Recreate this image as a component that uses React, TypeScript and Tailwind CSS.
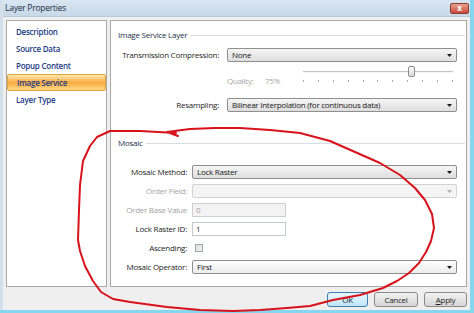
import React from "react";

const Arrow = ({ disabled }: { disabled?: boolean }) => (
  <svg width="5" height="3" viewBox="0 0 5 3" className="shrink-0">
    <path d="M0 0 L5 0 L2.5 3 Z" fill={disabled ? "#b0b0b0" : "#1a1a1a"} />
  </svg>
);

const Select = ({ value, disabled, className = "" }: { value: string; disabled?: boolean; className?: string }) => (
  <div
    className={
      "h-[14px] flex items-center justify-between pl-[4px] pr-[4px] rounded-[2px] border " +
      (disabled
        ? "border-[#d3d3d3] bg-[#f4f4f4] text-[#a0a0a0] "
        : "border-[#8f8f8f] bg-gradient-to-b from-[#f6f6f6] to-[#dedede] text-[#1a1a1a] ") +
      className
    }
  >
    <span className="leading-none whitespace-nowrap">{value}</span>
    <Arrow disabled={disabled} />
  </div>
);

const Label = ({ children, disabled, w }: { children: React.ReactNode; disabled?: boolean; w: string }) => (
  <div
    className={
      "text-right shrink-0 leading-none whitespace-nowrap " + w + (disabled ? " text-[#a3a3a3]" : " text-[#1e1e1e]")
    }
  >
    {children}
  </div>
);

const GroupHeader = ({ title }: { title: string }) => (
  <div className="flex items-center gap-[3px] h-[12px]">
    <span className="text-[#1e2f4a] leading-none">{title}</span>
    <div className="flex-1 h-px bg-[#d5dde5]" />
  </div>
);

const Btn = ({ children, def, w }: { children: React.ReactNode; def?: boolean; w: string }) => (
  <div
    className={
      "h-[15px] flex items-center justify-center rounded-[3px] border text-[#1e1e1e] " +
      w +
      (def
        ? " border-[#3c7fb1] bg-gradient-to-b from-[#eaf6fd] to-[#bee6fd]"
        : " border-[#8a8a8a] bg-gradient-to-b from-[#f2f2f2] to-[#d6d6d6]")
    }
  >
    {children}
  </div>
);

const navItems = ["Description", "Source Data", "Popup Content", "Image Service", "Layer Type"];

export default function App() {
  return (
    <div className="w-[474px] h-[313px] bg-[#86d6ef] relative overflow-hidden font-['Open_Sans','Noto_Sans',sans-serif] text-[8px] tracking-[-0.25px]">
      <div className="w-[470px] h-[310px] flex flex-col bg-[#efefef] border-l-[3px] border-[#d3e0ec]">
        {/* title bar */}
        <div className="h-[17px] flex items-center justify-between pl-[2px] pr-[1px] bg-gradient-to-b from-[#d9e6f2] to-[#c8d8e8] border-b border-[#b9c9d9]">
          <span className="text-[#1b2c44] text-[8.5px] leading-none">Layer Properties</span>
          <div className="w-[19px] h-[11px] rounded-[2px] border border-[#8b3b30] bg-gradient-to-b from-[#e9a293] to-[#c7473a] flex items-center justify-center text-white text-[8px] font-bold leading-none">
            x
          </div>
        </div>

        <div className="flex-1 flex flex-col pt-[3px] pl-[3px] pr-[3px]">
          <div className="flex gap-[3px] h-[267px]">
            {/* nav */}
            <div className="w-[101px] border border-[#a9a9a9] bg-white pt-[2px] flex flex-col">
              {navItems.map((n) => (
                <div
                  key={n}
                  className={
                    "h-[17px] flex items-center pl-[9px] leading-none font-semibold text-[#223c86] " +
                    (n === "Image Service"
                      ? "rounded-[2px] border border-[#e1a43a] bg-gradient-to-b from-[#fde8a9] via-[#f9aa3f] to-[#fcd87f] text-[#2a2a40]"
                      : "")
                  }
                >
                  {n}
                </div>
              ))}
            </div>

            {/* right panel */}
            <div className="w-[357px] border border-[#a9a9a9] bg-white flex flex-col pl-[7px] pr-[1px]">
              <div className="mt-[8px]">
                <GroupHeader title="Image Service Layer" />
              </div>
              <div className="flex items-center gap-[8px] mt-[7px] pr-[8px]">
                <Label w="w-[101px]">Transmission Compression:</Label>
                <Select value="None" className="flex-1" />
              </div>
              {/* quality slider */}
              <div className="flex h-[24px] mt-[2px] pr-[8px]">
                <div className="w-[101px] shrink-0" />
                <div className="w-[8px] shrink-0" />
                <div className="flex items-end pb-[3px] text-[#a8a8a8] leading-none w-[76px] shrink-0">
                  <span className="w-[38px]">Quality:</span>
                  <span>75%</span>
                </div>
                <div className="relative flex-1">
                  <div className="absolute left-0 right-[4px] top-[7px] h-[2px] bg-[#c4c4c4] border-b border-[#f4f4f4]" />
                  <div className="absolute left-[105px] top-[2px] w-[7px] h-[11px] rounded-[2px] border border-[#8c8c8c] bg-gradient-to-b from-[#fafafa] to-[#dcdcdc]" />
                  <div className="absolute left-0 right-[4px] top-[16px] flex justify-between">
                    {Array.from({ length: 11 }).map((_, i) => (
                      <div key={i} className="w-px h-[2px] bg-[#a8a8a8]" />
                    ))}
                  </div>
                </div>
              </div>
              <div className="flex items-center gap-[8px] mt-[10px] pr-[8px]">
                <Label w="w-[101px]">Resampling:</Label>
                <Select value="Bilinear Interpolation (for continuous data)" className="flex-1" />
              </div>

              <div className="mt-[25px]">
                <GroupHeader title="Mosaic" />
              </div>

              <div className="flex flex-col gap-[5px] mt-[16px] pr-[8px]">
                <div className="flex items-center gap-[5px]">
                  <Label w="w-[69px]">Mosaic Method:</Label>
                  <Select value="Lock Raster" className="flex-1" />
                </div>
                <div className="flex items-center gap-[5px]">
                  <Label w="w-[69px]" disabled>
                    Order Field:
                  </Label>
                  <Select value="" disabled className="flex-1" />
                </div>
                <div className="flex items-center gap-[5px]">
                  <Label w="w-[69px]" disabled>
                    Order Base Value
                  </Label>
                  <div className="w-[94px] h-[14px] border border-[#cfcfcf] bg-[#f3f3f3] flex items-center pl-[3px] text-[#a0a0a0] leading-none">
                    0
                  </div>
                </div>
                <div className="flex items-center gap-[5px]">
                  <Label w="w-[69px]">Lock Raster ID:</Label>
                  <div className="w-[94px] h-[14px] border border-[#c2c8d0] bg-white flex items-center pl-[3px] text-[#1a1a1a] leading-none">
                    1
                  </div>
                </div>
                <div className="flex items-center gap-[5px] h-[14px]">
                  <Label w="w-[69px]">Ascending:</Label>
                  <div className="ml-[3px] w-[8px] h-[8px] border border-[#9ea4ab] bg-gradient-to-br from-[#dcdcdc] to-[#f6f6f6]" />
                </div>
                <div className="flex items-center gap-[5px]">
                  <Label w="w-[69px]">Mosaic Operator:</Label>
                  <Select value="First" className="flex-1 !from-white !to-[#ececec]" />
                </div>
              </div>
            </div>
          </div>

          <div className="flex justify-end gap-[6px] mt-[5px]">
            <Btn def w="w-[41px]">OK</Btn>
            <Btn w="w-[44px]">Cancel</Btn>
            <Btn w="w-[43px]">
              <span className="underline">A</span>pply
            </Btn>
          </div>
        </div>
      </div>

      {/* hand-drawn red annotation */}
      <svg className="absolute inset-0 pointer-events-none" width="474" height="313" viewBox="0 0 474 313">
        <path
          d="M178 136 L167 132 L190 129 L215 128 L240 128 L270 130 L300 133 L330 141 L355 152 L380 163 L400 175 L415 188 L425 200 L432 214 L434 228 L431 241 L426 252 L419 263 L409 273 L397 281 L383 288 L360 295 L333 300 L310 306 L287 308 L260 310 L233 311 L200 310 L167 307 L130 302 L113 299 L101 292 L93 281 L85 266 L80 251 L78 240 L79 210 L80 185 L83 161 L90 146 L97 137 L110 131 L140 131 L176 133"
          fill="none"
          stroke="#d8121b"
          strokeWidth="2"
          strokeLinejoin="round"
          strokeLinecap="round"
        />
      </svg>
    </div>
  );
}
